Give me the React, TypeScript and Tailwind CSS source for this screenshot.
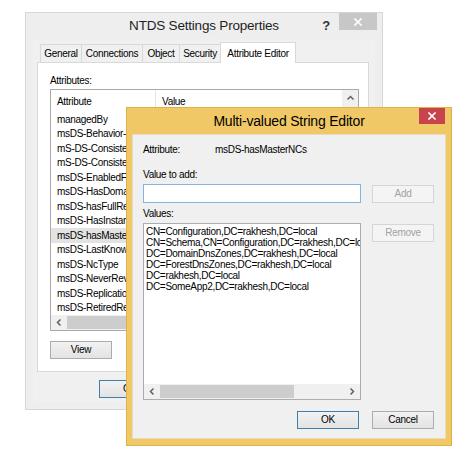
import React from "react";

const FONT = "font-['Liberation_Sans',Arial,sans-serif] tracking-[-0.3px]";

function CloseX({ size = 8 }: { size?: number }) {
  return (
    <svg width={size} height={size} viewBox="0 0 8 8">
      <path d="M1 1 L7 7 M7 1 L1 7" stroke="#ffffff" strokeWidth="1.6" strokeLinecap="square" />
    </svg>
  );
}

function Chevron({ dir }: { dir: "up" | "left" | "right" }) {
  const d =
    dir === "up" ? "M1.5 5.5 L4.5 2.5 L7.5 5.5" : dir === "left" ? "M5.5 1.5 L2.5 4.5 L5.5 7.5" : "M2.5 1.5 L5.5 4.5 L2.5 7.5";
  return (
    <svg width="9" height="9" viewBox="0 0 9 9">
      <path d={d} stroke="#606060" strokeWidth="1.5" fill="none" />
    </svg>
  );
}

function Btn({
  label,
  kind = "normal",
  className = "",
}: {
  label: string;
  kind?: "normal" | "default" | "disabled";
  className?: string;
}) {
  const base = "flex items-center justify-center w-[62px] h-[18px] text-[10px] leading-none border";
  const k =
    kind === "default"
      ? "border-[#3c7fb1] bg-gradient-to-b from-[#f2f2f2] to-[#e3e3e3] text-black"
      : kind === "disabled"
      ? "border-[#d5d5d5] bg-[#f4f4f4] text-[#a3a3a3]"
      : "border-[#acacac] bg-gradient-to-b from-[#f2f2f2] to-[#e3e3e3] text-black";
  return <div className={`${base} ${k} ${className}`}>{label}</div>;
}

const attrs = [
  "managedBy",
  "msDS-Behavior-Version",
  "mS-DS-ConsistencyChildCount",
  "mS-DS-ConsistencyGuid",
  "msDS-EnabledFeature",
  "msDS-HasDomainNCs",
  "msDS-hasFullReplicaNCs",
  "msDS-HasInstantiatedNCs",
  "msDS-hasMasterNCs",
  "msDS-LastKnownRDN",
  "msDS-NcType",
  "msDS-NeverRevealGroup",
  "msDS-ReplicationEpoch",
  "msDS-RetiredReplNCSignatures",
];

const values = [
  "CN=Configuration,DC=rakhesh,DC=local",
  "CN=Schema,CN=Configuration,DC=rakhesh,DC=local",
  "DC=DomainDnsZones,DC=rakhesh,DC=local",
  "DC=ForestDnsZones,DC=rakhesh,DC=local",
  "DC=rakhesh,DC=local",
  "DC=SomeApp2,DC=rakhesh,DC=local",
];

const tabs = [
  { label: "General", w: "w-[42px]" },
  { label: "Connections", w: "w-[62px]" },
  { label: "Object", w: "w-[38px]" },
  { label: "Security", w: "w-[42px]" },
];

function BackWindow() {
  return (
    <div className="absolute left-[25px] top-[12px] w-[358px] h-[398px] bg-[#eeeeee] border border-[#d6d6d6] flex flex-col">
      {/* title bar */}
      <div className="grid grid-cols-[1fr_auto_1fr] h-[26px]">
        <div />
        <div className="flex items-center pt-[1px] text-[13.5px] tracking-[-0.2px] text-[#1e1e1e]">NTDS Settings Properties</div>
        <div className="flex justify-end items-start">
          <div className="w-[16px] mr-[5px] mt-[3px] text-center text-[13px] font-bold text-[#333]">?</div>
          <div className="w-[38px] h-[17px] mr-[5px] bg-[#c7c7c7] flex items-center justify-center">
            <CloseX />
          </div>
        </div>
      </div>
      {/* client */}
      <div className="flex-1 mx-[7px] mb-[7px] bg-[#f0f0f0] pl-[4px] pt-[3px] pr-[6px] flex flex-col">
        <div className="flex items-end h-[20px] pl-[3px]">
          {tabs.map((t, i) => (
            <div
              key={t.label}
              className={`${t.w} h-[18px] ${i > 0 ? "-ml-px" : ""} border border-b-0 border-[#d9d9d9] bg-[#f0f0f0] flex items-center justify-center text-[10px] text-black`}
            >
              {t.label}
            </div>
          ))}
          <div className="-ml-px w-[76px] h-[21px] -mb-px relative z-10 border border-b-0 border-[#d9d9d9] bg-white flex items-center justify-center text-[10px] text-black">
            Attribute Editor
          </div>
        </div>
        <div className="w-[332px] h-[310px] bg-white border border-[#d9d9d9] pl-[12px] pt-[11px] flex flex-col">
          <div className="h-[13px] leading-[13px] text-[10px] text-black">Attributes:</div>
          <div className="mt-[2px] w-[309px] h-[242px] border border-[#a9a9a9] flex flex-col">
            <div className="flex flex-1 min-h-0">
              <div className="flex-1 flex flex-col overflow-hidden">
                <div className="flex h-[22px] items-center text-[10px]">
                  <div className="w-[105px] h-full flex items-center pl-[6px] border-r border-[#e5e5e5]">Attribute</div>
                  <div className="pl-[6px]">Value</div>
                </div>
                {attrs.map((a, i) => (
                  <div
                    key={a}
                    className={`h-[14.5px] flex items-center text-[10px] whitespace-nowrap ${i === 8 ? "bg-[#e3e3e3]" : ""}`}
                  >
                    <div className="w-[105px] pl-[6px] overflow-hidden">{a}</div>
                    <div className="pl-[6px]" />
                  </div>
                ))}
              </div>
              <div className="w-[16px] bg-[#f0f0f0] flex flex-col items-center">
                <div className="h-[17px] flex items-center">
                  <Chevron dir="up" />
                </div>
              </div>
            </div>
            <div className="h-[15px] flex bg-[#f0f0f0]">
              <div className="w-[16px] flex items-center justify-center">
                <Chevron dir="left" />
              </div>
              <div className="w-[200px] my-[1px] bg-[#cdcdcd]" />
            </div>
          </div>
          <div className="mt-[10px]">
            <Btn label="View" />
          </div>
        </div>
        <div className="flex justify-end gap-[7px] mt-[8px] pr-[1px]">
          <Btn label="OK" kind="default" />
          <Btn label="Cancel" />
          <Btn label="Apply" />
          <Btn label="Help" />
        </div>
      </div>
    </div>
  );
}

function FrontWindow() {
  return (
    <div className="absolute left-[126px] top-[107px] w-[326px] h-[339px] bg-[#f1c866] border border-[#e0b04c] flex flex-col z-20">
      <div className="grid grid-cols-[1fr_auto_1fr] h-[26px]">
        <div />
        <div className="flex items-center pt-[1px] text-[14px] tracking-[-0.2px] text-black">Multi-valued String Editor</div>
        <div className="flex justify-end items-start">
          <div className="w-[26px] h-[16px] mr-[6px] bg-[#c9434c] flex items-center justify-center">
            <CloseX />
          </div>
        </div>
      </div>
      <div className="flex-1 mx-[5px] mb-[6px] bg-[#f0f0f0] border border-[#e6dcc6] pl-[10px] pr-[11px] pt-[8px] flex flex-col text-[10px] text-black">
        <div className="flex h-[13px] leading-[13px]">
          <div className="w-[72px]">Attribute:</div>
          <div>msDS-hasMasterNCs</div>
        </div>
        <div className="mt-[12px] h-[13px] leading-[13px]">Value to add:</div>
        <div className="mt-[3px] flex items-start">
          <div className="w-[218px] h-[19px] bg-white border border-[#86b4e2]" />
          <Btn label="Add" kind="disabled" className="ml-[11px] mt-[1px]" />
        </div>
        <div className="mt-[4px] h-[13px] leading-[13px]">Values:</div>
        <div className="mt-[3px] flex items-start">
          <div className="w-[218px] h-[177px] bg-white border border-[#abadb3] flex flex-col">
            <div className="flex-1 overflow-hidden pl-[2px] pt-[2px] leading-[11px] whitespace-nowrap">
              {values.map((v) => (
                <div key={v}>{v}</div>
              ))}
            </div>
            <div className="h-[15px] flex bg-[#f0f0f0]">
              <div className="w-[16px] flex items-center justify-center">
                <Chevron dir="left" />
              </div>
              <div className="w-[134px] my-[1px] bg-[#cdcdcd]" />
              <div className="flex-1" />
              <div className="w-[16px] flex items-center justify-center">
                <Chevron dir="right" />
              </div>
            </div>
          </div>
          <Btn label="Remove" kind="disabled" className="ml-[11px] mt-[1px]" />
        </div>
        <div className="mt-[11px] flex justify-end gap-[13px]">
          <Btn label="OK" kind="default" />
          <Btn label="Cancel" />
        </div>
      </div>
    </div>
  );
}

export default function App() {
  return (
    <div className={`relative w-[474px] h-[457px] bg-white overflow-hidden ${FONT}`}>
      <BackWindow />
      <FrontWindow />
    </div>
  );
}
